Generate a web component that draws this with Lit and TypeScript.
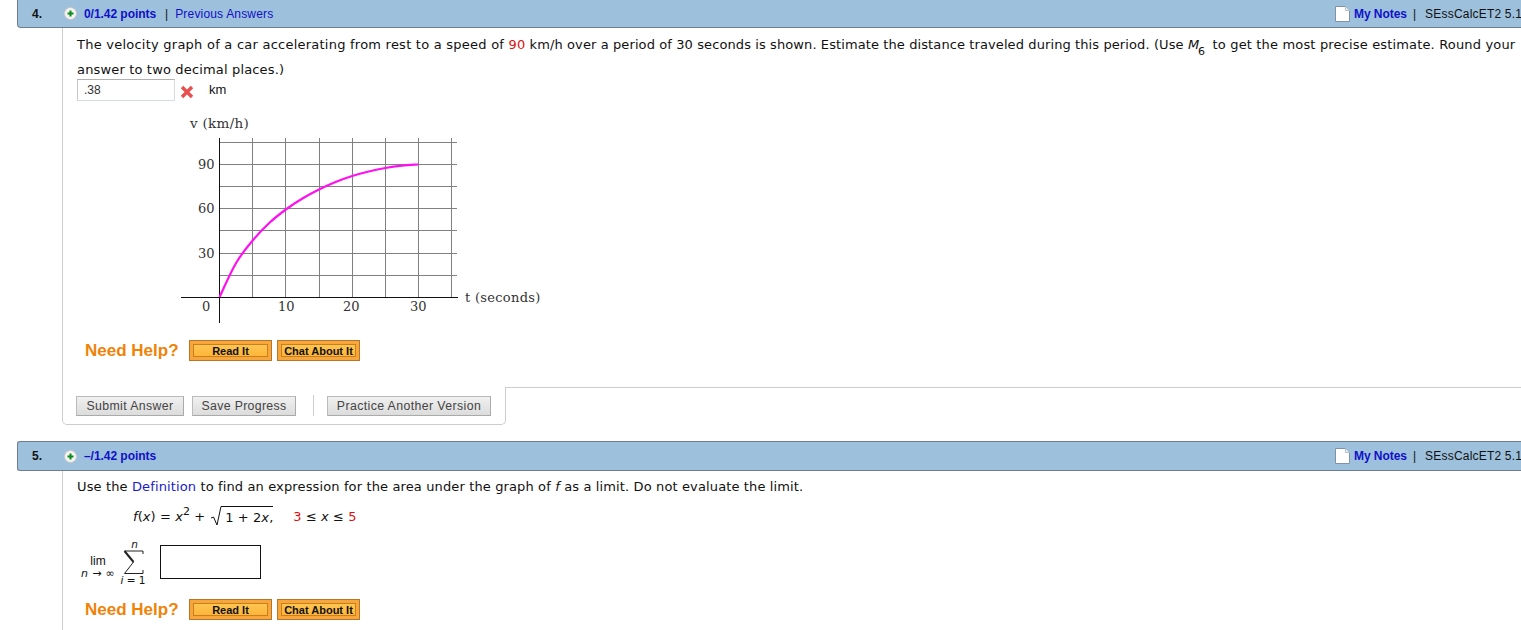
import { LitElement, html, css, svg } from "lit";
import { customElement } from "lit/decorators.js";

const xs = [252.5, 285.5, 319.5, 352.5, 385.5, 418.5, 451.5];
const ys = [142.5, 164.5, 186.5, 208.5, 230.5, 253.5, 275.5];
const curveY = [297, 263, 240.5, 223, 209.5, 198.5, 189.5, 182, 176, 171.5, 168, 165.7, 164.5];
const curve: [number, number][] = curveY.map((y, i) => [219.5 + (199 / 12) * i, y]);

function curvePath(p: [number, number][]) {
  let d = `M${p[0][0]} ${p[0][1]}`;
  for (let i = 0; i < p.length - 1; i++) {
    const a = p[Math.max(i - 1, 0)], b = p[i], c = p[i + 1], e = p[Math.min(i + 2, p.length - 1)];
    const c1x = b[0] + (c[0] - a[0]) / 6, c1y = b[1] + (c[1] - a[1]) / 6;
    const c2x = c[0] - (e[0] - b[0]) / 6, c2y = c[1] - (e[1] - b[1]) / 6;
    d += `C${c1x} ${c1y} ${c2x} ${c2y} ${c[0]} ${c[1]}`;
  }
  return d;
}

@customElement("app-root")
export class AppRoot extends LitElement {
  static styles = css`
    :host { display: block; width: 1521px; height: 630px; overflow: hidden; background: #fff; font-family: "DejaVu Sans", Verdana, sans-serif; font-size: 13px; color: #111; }
    .page { width: 1521px; }
    .bar { margin-left: 17px; display: flex; align-items: center; background: #9dc0dd; border-bottom: 1px solid #6d7f8e; font: 12px "Liberation Sans", Arial, sans-serif; white-space: nowrap; overflow: hidden; }
    .bar.first { height: 27px; border-left: 1px solid #6d7f8e; border-bottom-left-radius: 4px; }
    .bar.second { height: 28px; margin-top: 16px; border-top: 1px solid #6d7f8e; border-left: 1px solid #6d7f8e; border-radius: 3px 0 0 3px; }
    .num { font-weight: bold; width: 46px; padding-left: 14px; box-sizing: border-box; color: #111; }
    .plus { width: 13px; height: 13px; margin-right: 7px; display: block; flex: none; }
    .pts { color: #1010c8; font-weight: bold; letter-spacing: -0.05px; }
    .sep { margin-left: 9px; color: #111; }
    .prev { color: #1010c8; margin-left: 7px; letter-spacing: 0.18px; }
    .right { margin-left: auto; display: flex; align-items: center; width: 186px; flex: none; }
    .doc { width: 15px; height: 16px; display: block; margin-right: 4px; flex: none; }
    .notes { color: #1010c8; font-weight: bold; letter-spacing: -0.05px; }
    .bar2 { margin-left: 6px; }
    .code { margin-left: 9px; letter-spacing: 0.2px; }
    .body { margin-left: 62px; border-left: 1px solid #ccc; padding-left: 14px; }
    .body.last { padding-bottom: 20px; }
    .q { line-height: 25px; white-space: nowrap; padding-top: 4px; letter-spacing: 0.16px; }
    .seg1 { letter-spacing: 0.237px; }
    .seg2 { letter-spacing: 0.1px; }
    .red { color: #e01010; }
    .blue { color: #1a1ac8; }
    i { font-style: italic; }
    .m6 { position: relative; padding-right: 9px; }
    .m6 sub { position: absolute; left: 10px; top: 9px; font-size: 11px; line-height: 11px; }
    .ans { display: flex; align-items: center; height: 22px; margin-top: -3px; }
    .field { width: 98px; height: 22px; box-sizing: border-box; border: 1px solid #d3dbe3; border-top-color: #b0b0b0; border-left-color: #c8c8c8; font: 12px "Liberation Sans", Arial, sans-serif; color: #333; padding: 3px 0 0 6px; }
    .x { width: 14px; height: 14px; margin: 3px 0 0 5px; display: block; }
    .km { margin-left: 15px; font: 13px "Liberation Sans", Arial, sans-serif; margin-top: -1px; }
    .graph { display: block; margin-left: -77px; margin-top: 9px; width: 600px; height: 229px; }
    .graph text { font-family: "DejaVu Serif", "Liberation Serif", serif; font-size: 13px; fill: #333; }
    .graph .wide { letter-spacing: 0.3px; }
    .graph .vl { font-size: 13.5px; }
    .help { display: flex; align-items: center; height: 22px; padding-left: 8px; }
    .need { font: bold 17px "Liberation Sans", Arial, sans-serif; color: #f08306; width: 104px; margin-top: 1px; }
    .obtn { height: 21px; box-sizing: border-box; width: 83px; background: #f8a53a; border: 1px solid #b5762c; display: flex; padding: 3px; margin-right: 5px; }
    .obtn span { flex: 1; display: flex; align-items: center; justify-content: center; padding-top: 1px; background: linear-gradient(#ffc552, #fdb63a); border: 1px solid #c77f20; font: bold 11px "Liberation Sans", Arial, sans-serif; color: #111; white-space: nowrap; }
    .gap1 { height: 26px; }
    .actions-row { display: flex; height: 38px; margin-left: 62px; }
    .actions { width: 444px; box-sizing: border-box; border: 1px solid #ccc; border-top: 0; border-radius: 0 0 5px 5px; display: flex; padding: 9px 0 0 13px; }
    .fill { flex: 1; border-top: 1px solid #ccc; }
    .gbtn { height: 20px; box-sizing: border-box; border: 1px solid #bbb; border-right-color: #aaa; border-bottom-color: #aaa; background: linear-gradient(#f0f0f0, #dcdcdc); font: 12.3px "Liberation Sans", Arial, sans-serif; letter-spacing: 0.4px; color: #444; display: flex; align-items: center; justify-content: center; white-space: nowrap; }
    .b1 { width: 108px; margin-right: 8px; }
    .b2 { width: 104px; letter-spacing: 0.32px; }
    .b3 { width: 164px; }
    .divider { width: 1px; height: 21px; background: #ccc; margin: -1px 13px 0 17px; }
    .q2 { line-height: 25px; padding-top: 3px; white-space: nowrap; letter-spacing: 0.13px; }
    .eq { display: flex; align-items: center; margin-left: 56px; height: 22px; margin-top: 6px; white-space: nowrap; letter-spacing: 0.08px; }
    .eq sup { font-size: 11px; line-height: 0; vertical-align: 6px; }
    .rad { display: flex; align-items: stretch; margin: 0 0 0 5px; }
    .rad svg { display: block; width: 15px; height: 20px; }
    .rad span { border-top: 1px solid #111; line-height: 19px; padding-top: 1px; height: 18px; }
    .range { margin-left: 20px; }
    .limrow { display: flex; margin-top: 18px; height: 50px; }
    .lim { width: 44px; flex: none; display: flex; flex-direction: column; align-items: center; margin-top: 10px; margin-left: -1px; }
    .lim .w { font: 12px "Liberation Sans", Arial, sans-serif; line-height: 13px; }
    .lim .s { font-size: 11px; line-height: 12px; margin-top: 0; white-space: nowrap; letter-spacing: 0.3px; }
    .sig { width: 26px; flex: none; display: flex; flex-direction: column; align-items: center; font-size: 10.5px; line-height: 12px; margin-top: -7px; white-space: nowrap; }
    .sig .top { margin-left: 3px; }
    .sig svg { width: 21px; height: 24px; display: block; }
    .box { width: 101px; height: 34px; box-sizing: border-box; border: 1px solid #111; margin-left: 14px; flex: none; }
    .help2 { margin-top: 3px; }
  `;

  plus() {
    return html`<svg class="plus" viewBox="0 0 13 13"><circle cx="6.5" cy="6.5" r="6" fill="#f4f4f4" stroke="#c8c8c8"/><path d="M6.5 3.5v6M3.5 6.5h6" stroke="#0a8a1a" stroke-width="2"/></svg>`;
  }
  doc() {
    return html`<svg class="doc" viewBox="0 0 15 16"><path d="M.5.500h10l4 4v11H.5z" fill="#fff" stroke="#7f93a5"/><path d="M10.500.500v4h4" fill="#e8eef3" stroke="#b5c3cf"/></svg>`;
  }
  help() {
    return html`<div class="need">Need Help?</div><div class="obtn"><span>Read It</span></div><div class="obtn"><span>Chat About It</span></div>`;
  }
  graph() {
    return svg`<svg class="graph" viewBox="0 110 600 229">
      ${xs.map((x) => svg`<line x1=${x} x2=${x} y1="138" y2="297" stroke="#808080"/>`)}
      ${ys.map((y) => svg`<line x1="219" x2="457" y1=${y} y2=${y} stroke="#808080"/>`)}
      <line x1="181" x2="458" y1="297.5" y2="297.5" stroke="#111"/>
      <line x1="219.5" x2="219.5" y1="138" y2="323" stroke="#111"/>
      <path d=${curvePath(curve)} fill="none" stroke="#ff10f0" stroke-width="2.2"/>
      <text class="vl wide" x="190" y="128">v (km/h)</text>
      <text x="198" y="168.500">90</text>
      <text x="198" y="212.500">60</text>
      <text x="198" y="257.500">30</text>
      <text x="202" y="311">0</text>
      <text x="278" y="311">10</text>
      <text x="343" y="311">20</text>
      <text x="410" y="311">30</text>
      <text class="wide" x="465" y="302">t (seconds)</text>
    </svg>`;
  }
  render() {
    return html`<div class="page">
      <div class="bar first">
        <div class="num">4.</div>${this.plus()}
        <span class="pts">0/1.42 points</span><span class="sep">|</span><span class="prev">Previous Answers</span>
        <div class="right">${this.doc()}<span class="notes">My Notes</span><span class="bar2">|</span><span class="code">SEssCalcET2 5.1</span></div>
      </div>
      <div class="body">
        <div class="q"><span class="seg1">The velocity graph of a car accelerating from rest to a speed of </span><span class="red">90</span><span class="seg2"> km/h over a period of 30 seconds is shown. Estimate the distance traveled during this period. (Use </span><span class="m6"><i>M</i><sub>6</sub></span> to get the most precise estimate. Round your<br>answer to two decimal places.)</div>
        <div class="ans"><div class="field">.38</div>
          <svg class="x" viewBox="0 0 14 14"><path d="M2 2l10 10M12 2L2 12" stroke="#e8504f" stroke-width="3.400"/></svg>
          <span class="km">km</span></div>
        ${this.graph()}
        <div class="help">${this.help()}</div>
        <div class="gap1"></div>
      </div>
      <div class="actions-row">
        <div class="actions">
          <div class="gbtn b1">Submit Answer</div>
          <div class="gbtn b2">Save Progress</div>
          <div class="divider"></div>
          <div class="gbtn b3">Practice Another Version</div>
        </div>
        <div class="fill"></div>
      </div>
      <div class="bar second">
        <div class="num">5.</div>${this.plus()}
        <span class="pts">–/1.42 points</span>
        <div class="right">${this.doc()}<span class="notes">My Notes</span><span class="bar2">|</span><span class="code">SEssCalcET2 5.1</span></div>
      </div>
      <div class="body last">
        <div class="q2">Use the <span class="blue">Definition</span> to find an expression for the area under the graph of <i>f</i> as a limit. Do not evaluate the limit.</div>
        <div class="eq"><span><i>f</i>(<i>x</i>) = <i>x</i><sup>2</sup> +</span>
          <div class="rad"><svg viewBox="0 0 15 20"><path d="M1 12l2.500-1 3.500 8 4-18.500H15" fill="none" stroke="#111"/></svg><span>1 + 2<i>x</i>,</span></div>
          <span class="range"><span class="red">3</span> ≤ <i>x</i> ≤ <span class="red">5</span></span></div>
        <div class="limrow">
          <div class="lim"><span class="w">lim</span><span class="s"><i>n</i> → ∞</span></div>
          <div class="sig"><i class="top">n</i><svg viewBox="0 0 21 24" preserveAspectRatio="none"><path d="M20 4V1H1.500M10.500 12L1.500 23.500H20V20" fill="none" stroke="#222" stroke-width="1"/><path d="M1.500 1l9 11" fill="none" stroke="#222" stroke-width="2"/></svg><span><i>i</i> = 1</span></div>
          <div class="box"></div>
        </div>
        <div class="help help2">${this.help()}</div>
      </div>
    </div>`;
  }
}
